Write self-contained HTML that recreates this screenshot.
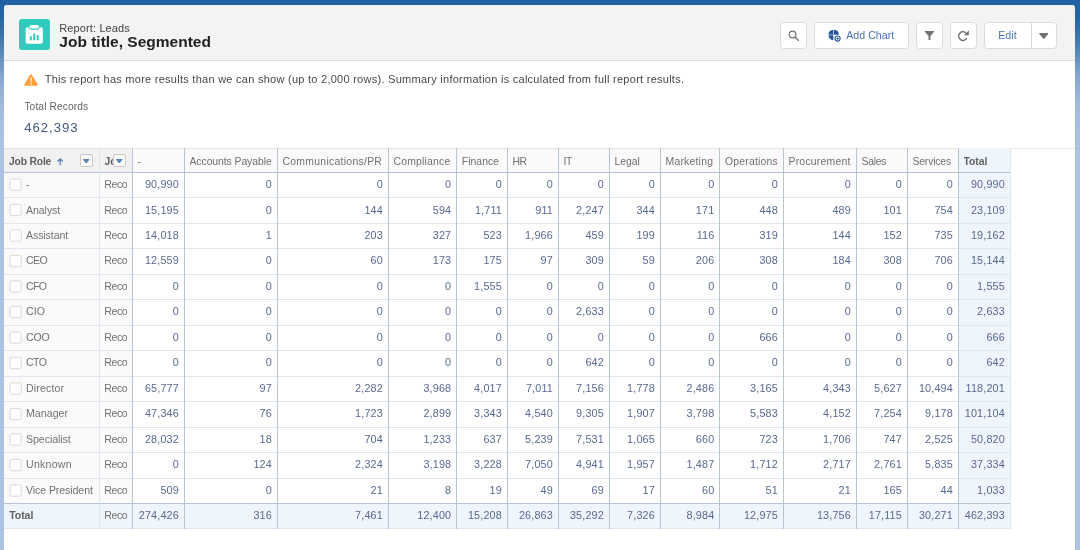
<!DOCTYPE html>
<html lang="en"><head><meta charset="utf-8"><title>Job title, Segmented</title>
<style>
*{box-sizing:border-box;margin:0;padding:0}
html,body{width:1080px;height:550px;overflow:hidden}
body{font-family:"Liberation Sans",sans-serif;font-size:11px;color:#3e3e3c;position:relative;
 background:linear-gradient(180deg,#1e62a3 0px,#2265a5 15px,#3a74ad 36px,#5c8cbd 55px,#7fa3cc 73px,#95b1d6 90px,#a4bbdc 109px,#abc0e0 130px,#adc1e1 150px,#adc1e1 550px)}
.panel{position:absolute;left:4px;top:5px;width:1071px;height:560px;background:linear-gradient(180deg,#f3f3f3 0,#f3f3f3 55px,#fff 55px);border-radius:3px 3px 0 0;overflow:hidden;will-change:transform}
.hdr{position:absolute;left:0;top:0;width:100%;height:55.5px;background:#f3f3f3;border-bottom:1px solid #dcdcdc}
.icon{position:absolute;left:15px;top:14px;width:30.5px;height:30.5px;border-radius:3px;background:#2ecbbe}
.t{position:absolute;white-space:nowrap}
.btn{position:absolute;top:17px;height:26.5px;background:#fff;border:1px solid #dddbda;border-radius:3.5px}
.btn span{position:absolute;font-size:10.6px;color:#4673b4;white-space:nowrap;line-height:13px}
.c{position:absolute;white-space:nowrap;overflow:hidden;line-height:13px}
.n{text-align:right;color:#586990;font-size:10.8px;letter-spacing:0.17px}
.g{color:#747270;font-size:10.6px}
.h{color:#72706e;font-size:10.4px}
.vl{position:absolute;width:1px}
.hl{position:absolute;height:1px}
.cb{position:absolute;width:12px;height:12px;background:#fff;border:1px solid #dedcdb;border-radius:2px}
.dd{position:absolute;width:13px;height:13px;background:#fafaf9;border:1px solid #c9c9c9;border-radius:2px}
.dd svg{position:absolute;left:2.2px;top:3.3px}
</style></head><body>
<div class="panel">

<div class="hdr"></div>
<div class="icon"><svg viewBox="0 -0.900 36 36" width="30.5" height="30.5" style="position:absolute;left:0;top:0"><path fill="#fff" d="M9.6 9.2h1.9c.2 1.5 1.4 2.5 2.9 2.5h7.2c1.5 0 2.7-1 2.9-2.5h1.9c1 0 1.7.8 1.7 1.7v15.6c0 1-.8 1.7-1.7 1.700H9.600c-1 0-1.700-.8-1.700-1.700V10.900c0-1 .8-1.700 1.700-1.700z"/><rect x="12.300" y="6.200" width="11.400" height="4.200" rx="2.100" fill="#fff"/><rect x="12.800" y="19.500" width="2.300" height="4.700" fill="#2ecbbe"/><rect x="16.800" y="16.300" width="2.400" height="7.900" fill="#2ecbbe"/><rect x="20.900" y="18" width="2.300" height="6.200" fill="#2ecbbe"/></svg></div>
<div class="t" style="left:55.3px;top:16.8px;font-size:11px;line-height:13px;color:#444;letter-spacing:0.119px;">Report: Leads</div>
<div class="t" style="left:55.3px;top:26.9px;font-size:15.5px;line-height:19px;font-weight:bold;color:#222;letter-spacing:0.003px;">Job title, Segmented</div>
<div class="btn" style="left:776px;width:26.5px;"><svg viewBox="0 0 24 24" width="11.6" height="11.6" style="position:absolute;left:6.6px;top:6.8px"><circle cx="9.500" cy="9.500" r="7" fill="none" stroke="#747270" stroke-width="2.500"/><path d="M14.800 14.800L22 22" stroke="#747270" stroke-width="2.800" stroke-linecap="round"/></svg></div>
<div class="btn" style="left:810px;width:94.5px;"><svg viewBox="0 0 14 13" width="14" height="13" style="position:absolute;left:13px;top:6px"><g fill="#25569e"><path d="M5.400 5.700V.800A5.200 5.200 0 0 0 .500 5.700z"/><path d="M6 5.700V.800A5.200 5.200 0 0 1 10.900 5.700z"/><path d="M5.400 6.300H.500A5.200 5.200 0 0 0 5.400 11.200z"/></g><circle cx="9.600" cy="9.600" r="3.500" fill="#fff"/><circle cx="9.600" cy="9.600" r="2.550" fill="#fff" stroke="#25569e" stroke-width="1.100"/><path d="M8.300 9.600h2.600M9.600 8.300v2.600" stroke="#25569e" stroke-width=".9"/></svg><span style="left:31.2px;top:6.2px;letter-spacing:0.044px;">Add Chart</span></div>
<div class="btn" style="left:912px;width:26.5px;"><svg viewBox="0 0 11 11" width="11" height="11" style="position:absolute;left:7px;top:7px"><path fill="#747270" d="M0.900 1.100H10c.3 0 .4.300.2.500L6.500 6.100V9.600c0 .2-.1.300-.3.300H4.800c-.2 0-.3-.1-.3-.3V6.100L.700 1.600C.500 1.400.600 1.100.900 1.100z"/></svg></div>
<div class="btn" style="left:946px;width:26.5px;"><svg viewBox="0 0 13 13" width="13" height="13" style="position:absolute;left:6px;top:6px"><path fill="none" stroke="#747270" stroke-width="1.500" stroke-linecap="round" d="M8.400 3.500A4.300 4.300 0 1 0 9.500 9.600"/><path fill="#747270" d="M11.800 1.500V6.300H6.900z"/></svg></div>
<div class="btn" style="left:980px;width:47.5px;border-radius:3.5px 0 0 3.5px"><span style="left:13.2px;top:6.4px;letter-spacing:0.084px;">Edit</span></div>
<div class="btn" style="left:1026.5px;width:26.5px;border-radius:0 3.5px 3.5px 0"><svg viewBox="0 0 20 13" width="9.5" height="6" style="position:absolute;left:7.1px;top:9.7px"><path fill="#747270" d="M1.300 0h17.400c1 0 1.600 1.200.9 2L11 12.400c-.5.700-1.500.7-2 0L.4 2C-.3 1.200.3 0 1.300 0z"/></svg></div>
<svg viewBox="0 0 28 24" width="14" height="11.800" style="position:absolute;left:20.4px;top:69px"><path fill="#ff9e3d" d="M12.300 1.500c.8-1.300 2.600-1.300 3.400 0l11.600 19.300c.8 1.300-.2 3-1.700 3H2.400c-1.500 0-2.500-1.700-1.700-3z"/><rect x="12.700" y="7.500" width="2.600" height="8.500" rx="1.200" fill="#fff"/><circle cx="14" cy="19.500" r="1.700" fill="#fff"/></svg>
<div class="t" style="left:40.7px;top:68.3px;font-size:11px;line-height:13px;color:#484848;letter-spacing:0.265px;">This report has more results than we can show (up to 2,000 rows). Summary information is calculated from full report results.</div>
<div class="t" style="left:20.4px;top:95.9px;font-size:10.2px;line-height:12px;color:#626262;letter-spacing:0.123px;">Total Records</div>
<div class="t" style="left:20.2px;top:113.6px;font-size:13.2px;line-height:17px;color:#43598a;letter-spacing:0.961px;">462,393</div>
<div class="hl" style="left:0;top:143px;width:1071px;background:#e4e6ea"></div>
<div style="position:absolute;left:0;top:144px;width:128.5px;height:23px;background:#f1f1f1"></div>
<div style="position:absolute;left:128.5px;top:144px;width:826px;height:23px;background:#fafafa"></div>
<div style="position:absolute;left:0;top:167px;width:128.5px;height:356.5px;background:#fafafa"></div>
<div style="position:absolute;left:954.5px;top:143px;width:52px;height:380.5px;background:#eef5fc"></div>
<div style="position:absolute;left:0;top:498.5px;width:1006.5px;height:25px;background:#eef5fc"></div>
<div class="hl" style="left:0;top:166.5px;width:1007px;background:#b7c4d6"></div>
<div class="hl" style="left:0;top:192px;width:1007px;background:#dfe6f0"></div>
<div class="hl" style="left:0;top:217.5px;width:1007px;background:#dfe6f0"></div>
<div class="hl" style="left:0;top:243px;width:1007px;background:#dfe6f0"></div>
<div class="hl" style="left:0;top:268.5px;width:1007px;background:#dfe6f0"></div>
<div class="hl" style="left:0;top:294px;width:1007px;background:#dfe6f0"></div>
<div class="hl" style="left:0;top:319.5px;width:1007px;background:#dfe6f0"></div>
<div class="hl" style="left:0;top:345px;width:1007px;background:#dfe6f0"></div>
<div class="hl" style="left:0;top:370.5px;width:1007px;background:#dfe6f0"></div>
<div class="hl" style="left:0;top:396px;width:1007px;background:#dfe6f0"></div>
<div class="hl" style="left:0;top:421.5px;width:1007px;background:#dfe6f0"></div>
<div class="hl" style="left:0;top:447px;width:1007px;background:#dfe6f0"></div>
<div class="hl" style="left:0;top:472.5px;width:1007px;background:#dfe6f0"></div>
<div class="hl" style="left:0;top:498px;width:1007px;background:#b7c4d6"></div>
<div class="hl" style="left:0;top:523px;width:1007px;background:#dfe6f0"></div>
<div class="vl" style="left:95px;top:143px;height:380.5px;background:#dfe6f0"></div>
<div class="vl" style="left:128px;top:143px;height:380.5px;background:#b7c4d6"></div>
<div class="vl" style="left:180px;top:143px;height:380.5px;background:#b7c4d6"></div>
<div class="vl" style="left:273px;top:143px;height:380.5px;background:#b7c4d6"></div>
<div class="vl" style="left:384px;top:143px;height:380.5px;background:#b7c4d6"></div>
<div class="vl" style="left:452.3px;top:143px;height:380.5px;background:#b7c4d6"></div>
<div class="vl" style="left:503px;top:143px;height:380.5px;background:#b7c4d6"></div>
<div class="vl" style="left:554px;top:143px;height:380.5px;background:#b7c4d6"></div>
<div class="vl" style="left:605px;top:143px;height:380.5px;background:#b7c4d6"></div>
<div class="vl" style="left:656px;top:143px;height:380.5px;background:#b7c4d6"></div>
<div class="vl" style="left:715.4px;top:143px;height:380.5px;background:#b7c4d6"></div>
<div class="vl" style="left:779px;top:143px;height:380.5px;background:#b7c4d6"></div>
<div class="vl" style="left:852px;top:143px;height:380.5px;background:#b7c4d6"></div>
<div class="vl" style="left:903px;top:143px;height:380.5px;background:#b7c4d6"></div>
<div class="vl" style="left:954px;top:143px;height:380.5px;background:#b7c4d6"></div>
<div class="vl" style="left:1006px;top:143px;height:380.5px;background:#dfe6f0"></div>
<div class="c h" style="left:5px;top:149.8px;width:90px;font-weight:bold;color:#626262;letter-spacing:-0.211px;">Job Role</div>
<svg viewBox="0 0 14 16" width="6.400" height="7.300" style="position:absolute;left:52.7px;top:153.4px"><path fill="none" stroke="#5b86b9" stroke-width="2.800" stroke-linecap="round" stroke-linejoin="round" d="M7 15V2M1.800 7L7 1.800 12.200 7"/></svg>
<div class="c h" style="left:100.5px;top:149.8px;width:9.500px;font-weight:bold;color:#626262">Jo</div>
<div class="c h" style="left:133.5px;top:149.8px;width:46.5px;">-</div>
<div class="c h" style="left:185.5px;top:149.8px;width:87.5px;letter-spacing:-0.065px;">Accounts Payable</div>
<div class="c h" style="left:278.5px;top:149.8px;width:105.5px;letter-spacing:0.291px;">Communications/PR</div>
<div class="c h" style="left:389.5px;top:149.8px;width:62.8px;letter-spacing:0.212px;">Compliance</div>
<div class="c h" style="left:457.8px;top:149.8px;width:45.2px;letter-spacing:0.033px;">Finance</div>
<div class="c h" style="left:508.5px;top:149.8px;width:45.5px;letter-spacing:-0.433px;">HR</div>
<div class="c h" style="left:559.5px;top:149.8px;width:45.5px;letter-spacing:-0.292px;">IT</div>
<div class="c h" style="left:610.5px;top:149.8px;width:45.5px;letter-spacing:-0.058px;">Legal</div>
<div class="c h" style="left:661.5px;top:149.8px;width:53.9px;letter-spacing:0.225px;">Marketing</div>
<div class="c h" style="left:720.9px;top:149.8px;width:58.1px;letter-spacing:0.232px;">Operations</div>
<div class="c h" style="left:784.5px;top:149.8px;width:67.5px;letter-spacing:0.242px;">Procurement</div>
<div class="c h" style="left:857.5px;top:149.8px;width:45.5px;letter-spacing:-0.27px;">Sales</div>
<div class="c h" style="left:908.5px;top:149.8px;width:45.5px;letter-spacing:-0.18px;">Services</div>
<div class="c h" style="left:959.5px;top:149.8px;width:46.5px;font-weight:bold;color:#626262;letter-spacing:-0.033px;">Total</div>
<div class="dd" style="left:76.3px;top:149.3px"><svg viewBox="0 0 13 9" width="6.500" height="4.500"><path fill="#5b86b9" d="M1 0h11c.8 0 1.200.9.700 1.500L7.300 8.600c-.4.500-1.200.5-1.600 0L.3 1.500C-.2.900.2 0 1 0z"/></svg></div>
<div class="dd" style="left:109.3px;top:149.3px"><svg viewBox="0 0 13 9" width="6.500" height="4.500"><path fill="#5b86b9" d="M1 0h11c.8 0 1.200.9.700 1.500L7.300 8.600c-.4.500-1.200.5-1.600 0L.3 1.500C-.2.900.2 0 1 0z"/></svg></div>
<div class="c g" style="left:22px;top:173px;width:72.5px;">-</div>
<div class="c g" style="left:100.3px;top:173px;width:22.700px;letter-spacing:-0.450px">Record Count</div>
<div class="c n" style="left:129.5px;top:173px;width:45.47px">90,990</div>
<div class="c n" style="left:181.5px;top:173px;width:86.47px">0</div>
<div class="c n" style="left:274.5px;top:173px;width:104.47px">0</div>
<div class="c n" style="left:385.5px;top:173px;width:61.77px">0</div>
<div class="c n" style="left:453.8px;top:173px;width:44.17px">0</div>
<div class="c n" style="left:504.5px;top:173px;width:44.47px">0</div>
<div class="c n" style="left:555.5px;top:173px;width:44.47px">0</div>
<div class="c n" style="left:606.5px;top:173px;width:44.47px">0</div>
<div class="c n" style="left:657.5px;top:173px;width:52.87px">0</div>
<div class="c n" style="left:716.9px;top:173px;width:57.07px">0</div>
<div class="c n" style="left:780.5px;top:173px;width:66.47px">0</div>
<div class="c n" style="left:853.5px;top:173px;width:44.47px">0</div>
<div class="c n" style="left:904.5px;top:173px;width:44.47px">0</div>
<div class="c n" style="left:955.5px;top:173px;width:45.47px">90,990</div>
<div class="c g" style="left:22px;top:199px;width:72.5px;letter-spacing:-0.079px;">Analyst</div>
<div class="c g" style="left:100.3px;top:199px;width:22.700px;letter-spacing:-0.450px">Record Count</div>
<div class="c n" style="left:129.5px;top:199px;width:45.47px">15,195</div>
<div class="c n" style="left:181.5px;top:199px;width:86.47px">0</div>
<div class="c n" style="left:274.5px;top:199px;width:104.47px">144</div>
<div class="c n" style="left:385.5px;top:199px;width:61.77px">594</div>
<div class="c n" style="left:453.8px;top:199px;width:44.17px">1,711</div>
<div class="c n" style="left:504.5px;top:199px;width:44.47px">911</div>
<div class="c n" style="left:555.5px;top:199px;width:44.47px">2,247</div>
<div class="c n" style="left:606.5px;top:199px;width:44.47px">344</div>
<div class="c n" style="left:657.5px;top:199px;width:52.87px">171</div>
<div class="c n" style="left:716.9px;top:199px;width:57.07px">448</div>
<div class="c n" style="left:780.5px;top:199px;width:66.47px">489</div>
<div class="c n" style="left:853.5px;top:199px;width:44.47px">101</div>
<div class="c n" style="left:904.5px;top:199px;width:44.47px">754</div>
<div class="c n" style="left:955.5px;top:199px;width:45.47px">23,109</div>
<div class="c g" style="left:22px;top:224px;width:72.5px;letter-spacing:-0.098px;">Assistant</div>
<div class="c g" style="left:100.3px;top:224px;width:22.700px;letter-spacing:-0.450px">Record Count</div>
<div class="c n" style="left:129.5px;top:224px;width:45.47px">14,018</div>
<div class="c n" style="left:181.5px;top:224px;width:86.47px">1</div>
<div class="c n" style="left:274.5px;top:224px;width:104.47px">203</div>
<div class="c n" style="left:385.5px;top:224px;width:61.77px">327</div>
<div class="c n" style="left:453.8px;top:224px;width:44.17px">523</div>
<div class="c n" style="left:504.5px;top:224px;width:44.47px">1,966</div>
<div class="c n" style="left:555.5px;top:224px;width:44.47px">459</div>
<div class="c n" style="left:606.5px;top:224px;width:44.47px">199</div>
<div class="c n" style="left:657.5px;top:224px;width:52.87px">116</div>
<div class="c n" style="left:716.9px;top:224px;width:57.07px">319</div>
<div class="c n" style="left:780.5px;top:224px;width:66.47px">144</div>
<div class="c n" style="left:853.5px;top:224px;width:44.47px">152</div>
<div class="c n" style="left:904.5px;top:224px;width:44.47px">735</div>
<div class="c n" style="left:955.5px;top:224px;width:45.47px">19,162</div>
<div class="c g" style="left:22px;top:249px;width:72.5px;letter-spacing:-0.656px;">CEO</div>
<div class="c g" style="left:100.3px;top:249px;width:22.700px;letter-spacing:-0.450px">Record Count</div>
<div class="c n" style="left:129.5px;top:249px;width:45.47px">12,559</div>
<div class="c n" style="left:181.5px;top:249px;width:86.47px">0</div>
<div class="c n" style="left:274.5px;top:249px;width:104.47px">60</div>
<div class="c n" style="left:385.5px;top:249px;width:61.77px">173</div>
<div class="c n" style="left:453.8px;top:249px;width:44.17px">175</div>
<div class="c n" style="left:504.5px;top:249px;width:44.47px">97</div>
<div class="c n" style="left:555.5px;top:249px;width:44.47px">309</div>
<div class="c n" style="left:606.5px;top:249px;width:44.47px">59</div>
<div class="c n" style="left:657.5px;top:249px;width:52.87px">206</div>
<div class="c n" style="left:716.9px;top:249px;width:57.07px">308</div>
<div class="c n" style="left:780.5px;top:249px;width:66.47px">184</div>
<div class="c n" style="left:853.5px;top:249px;width:44.47px">308</div>
<div class="c n" style="left:904.5px;top:249px;width:44.47px">706</div>
<div class="c n" style="left:955.5px;top:249px;width:45.47px">15,144</div>
<div class="c g" style="left:22px;top:275px;width:72.5px;letter-spacing:-0.625px;">CFO</div>
<div class="c g" style="left:100.3px;top:275px;width:22.700px;letter-spacing:-0.450px">Record Count</div>
<div class="c n" style="left:129.5px;top:275px;width:45.47px">0</div>
<div class="c n" style="left:181.5px;top:275px;width:86.47px">0</div>
<div class="c n" style="left:274.5px;top:275px;width:104.47px">0</div>
<div class="c n" style="left:385.5px;top:275px;width:61.77px">0</div>
<div class="c n" style="left:453.8px;top:275px;width:44.17px">1,555</div>
<div class="c n" style="left:504.5px;top:275px;width:44.47px">0</div>
<div class="c n" style="left:555.5px;top:275px;width:44.47px">0</div>
<div class="c n" style="left:606.5px;top:275px;width:44.47px">0</div>
<div class="c n" style="left:657.5px;top:275px;width:52.87px">0</div>
<div class="c n" style="left:716.9px;top:275px;width:57.07px">0</div>
<div class="c n" style="left:780.5px;top:275px;width:66.47px">0</div>
<div class="c n" style="left:853.5px;top:275px;width:44.47px">0</div>
<div class="c n" style="left:904.5px;top:275px;width:44.47px">0</div>
<div class="c n" style="left:955.5px;top:275px;width:45.47px">1,555</div>
<div class="c g" style="left:22px;top:300px;width:72.5px;letter-spacing:0.052px;">CIO</div>
<div class="c g" style="left:100.3px;top:300px;width:22.700px;letter-spacing:-0.450px">Record Count</div>
<div class="c n" style="left:129.5px;top:300px;width:45.47px">0</div>
<div class="c n" style="left:181.5px;top:300px;width:86.47px">0</div>
<div class="c n" style="left:274.5px;top:300px;width:104.47px">0</div>
<div class="c n" style="left:385.5px;top:300px;width:61.77px">0</div>
<div class="c n" style="left:453.8px;top:300px;width:44.17px">0</div>
<div class="c n" style="left:504.5px;top:300px;width:44.47px">0</div>
<div class="c n" style="left:555.5px;top:300px;width:44.47px">2,633</div>
<div class="c n" style="left:606.5px;top:300px;width:44.47px">0</div>
<div class="c n" style="left:657.5px;top:300px;width:52.87px">0</div>
<div class="c n" style="left:716.9px;top:300px;width:57.07px">0</div>
<div class="c n" style="left:780.5px;top:300px;width:66.47px">0</div>
<div class="c n" style="left:853.5px;top:300px;width:44.47px">0</div>
<div class="c n" style="left:904.5px;top:300px;width:44.47px">0</div>
<div class="c n" style="left:955.5px;top:300px;width:45.47px">2,633</div>
<div class="c g" style="left:22px;top:326px;width:72.5px;letter-spacing:-0.18px;">COO</div>
<div class="c g" style="left:100.3px;top:326px;width:22.700px;letter-spacing:-0.450px">Record Count</div>
<div class="c n" style="left:129.5px;top:326px;width:45.47px">0</div>
<div class="c n" style="left:181.5px;top:326px;width:86.47px">0</div>
<div class="c n" style="left:274.5px;top:326px;width:104.47px">0</div>
<div class="c n" style="left:385.5px;top:326px;width:61.77px">0</div>
<div class="c n" style="left:453.8px;top:326px;width:44.17px">0</div>
<div class="c n" style="left:504.5px;top:326px;width:44.47px">0</div>
<div class="c n" style="left:555.5px;top:326px;width:44.47px">0</div>
<div class="c n" style="left:606.5px;top:326px;width:44.47px">0</div>
<div class="c n" style="left:657.5px;top:326px;width:52.87px">0</div>
<div class="c n" style="left:716.9px;top:326px;width:57.07px">666</div>
<div class="c n" style="left:780.5px;top:326px;width:66.47px">0</div>
<div class="c n" style="left:853.5px;top:326px;width:44.47px">0</div>
<div class="c n" style="left:904.5px;top:326px;width:44.47px">0</div>
<div class="c n" style="left:955.5px;top:326px;width:45.47px">666</div>
<div class="c g" style="left:22px;top:351px;width:72.5px;letter-spacing:-0.557px;">CTO</div>
<div class="c g" style="left:100.3px;top:351px;width:22.700px;letter-spacing:-0.450px">Record Count</div>
<div class="c n" style="left:129.5px;top:351px;width:45.47px">0</div>
<div class="c n" style="left:181.5px;top:351px;width:86.47px">0</div>
<div class="c n" style="left:274.5px;top:351px;width:104.47px">0</div>
<div class="c n" style="left:385.5px;top:351px;width:61.77px">0</div>
<div class="c n" style="left:453.8px;top:351px;width:44.17px">0</div>
<div class="c n" style="left:504.5px;top:351px;width:44.47px">0</div>
<div class="c n" style="left:555.5px;top:351px;width:44.47px">642</div>
<div class="c n" style="left:606.5px;top:351px;width:44.47px">0</div>
<div class="c n" style="left:657.5px;top:351px;width:52.87px">0</div>
<div class="c n" style="left:716.9px;top:351px;width:57.07px">0</div>
<div class="c n" style="left:780.5px;top:351px;width:66.47px">0</div>
<div class="c n" style="left:853.5px;top:351px;width:44.47px">0</div>
<div class="c n" style="left:904.5px;top:351px;width:44.47px">0</div>
<div class="c n" style="left:955.5px;top:351px;width:45.47px">642</div>
<div class="c g" style="left:22px;top:377px;width:72.5px;letter-spacing:0.151px;">Director</div>
<div class="c g" style="left:100.3px;top:377px;width:22.700px;letter-spacing:-0.450px">Record Count</div>
<div class="c n" style="left:129.5px;top:377px;width:45.47px">65,777</div>
<div class="c n" style="left:181.5px;top:377px;width:86.47px">97</div>
<div class="c n" style="left:274.5px;top:377px;width:104.47px">2,282</div>
<div class="c n" style="left:385.5px;top:377px;width:61.77px">3,968</div>
<div class="c n" style="left:453.8px;top:377px;width:44.17px">4,017</div>
<div class="c n" style="left:504.5px;top:377px;width:44.47px">7,011</div>
<div class="c n" style="left:555.5px;top:377px;width:44.47px">7,156</div>
<div class="c n" style="left:606.5px;top:377px;width:44.47px">1,778</div>
<div class="c n" style="left:657.5px;top:377px;width:52.87px">2,486</div>
<div class="c n" style="left:716.9px;top:377px;width:57.07px">3,165</div>
<div class="c n" style="left:780.5px;top:377px;width:66.47px">4,343</div>
<div class="c n" style="left:853.5px;top:377px;width:44.47px">5,627</div>
<div class="c n" style="left:904.5px;top:377px;width:44.47px">10,494</div>
<div class="c n" style="left:955.5px;top:377px;width:45.47px">118,201</div>
<div class="c g" style="left:22px;top:402px;width:72.5px;letter-spacing:0.041px;">Manager</div>
<div class="c g" style="left:100.3px;top:402px;width:22.700px;letter-spacing:-0.450px">Record Count</div>
<div class="c n" style="left:129.5px;top:402px;width:45.47px">47,346</div>
<div class="c n" style="left:181.5px;top:402px;width:86.47px">76</div>
<div class="c n" style="left:274.5px;top:402px;width:104.47px">1,723</div>
<div class="c n" style="left:385.5px;top:402px;width:61.77px">2,899</div>
<div class="c n" style="left:453.8px;top:402px;width:44.17px">3,343</div>
<div class="c n" style="left:504.5px;top:402px;width:44.47px">4,540</div>
<div class="c n" style="left:555.5px;top:402px;width:44.47px">9,305</div>
<div class="c n" style="left:606.5px;top:402px;width:44.47px">1,907</div>
<div class="c n" style="left:657.5px;top:402px;width:52.87px">3,798</div>
<div class="c n" style="left:716.9px;top:402px;width:57.07px">5,583</div>
<div class="c n" style="left:780.5px;top:402px;width:66.47px">4,152</div>
<div class="c n" style="left:853.5px;top:402px;width:44.47px">7,254</div>
<div class="c n" style="left:904.5px;top:402px;width:44.47px">9,178</div>
<div class="c n" style="left:955.5px;top:402px;width:45.47px">101,104</div>
<div class="c g" style="left:22px;top:428px;width:72.5px;letter-spacing:-0.064px;">Specialist</div>
<div class="c g" style="left:100.3px;top:428px;width:22.700px;letter-spacing:-0.450px">Record Count</div>
<div class="c n" style="left:129.5px;top:428px;width:45.47px">28,032</div>
<div class="c n" style="left:181.5px;top:428px;width:86.47px">18</div>
<div class="c n" style="left:274.5px;top:428px;width:104.47px">704</div>
<div class="c n" style="left:385.5px;top:428px;width:61.77px">1,233</div>
<div class="c n" style="left:453.8px;top:428px;width:44.17px">637</div>
<div class="c n" style="left:504.5px;top:428px;width:44.47px">5,239</div>
<div class="c n" style="left:555.5px;top:428px;width:44.47px">7,531</div>
<div class="c n" style="left:606.5px;top:428px;width:44.47px">1,065</div>
<div class="c n" style="left:657.5px;top:428px;width:52.87px">660</div>
<div class="c n" style="left:716.9px;top:428px;width:57.07px">723</div>
<div class="c n" style="left:780.5px;top:428px;width:66.47px">1,706</div>
<div class="c n" style="left:853.5px;top:428px;width:44.47px">747</div>
<div class="c n" style="left:904.5px;top:428px;width:44.47px">2,525</div>
<div class="c n" style="left:955.5px;top:428px;width:45.47px">50,820</div>
<div class="c g" style="left:22px;top:453px;width:72.5px;letter-spacing:0.247px;">Unknown</div>
<div class="c g" style="left:100.3px;top:453px;width:22.700px;letter-spacing:-0.450px">Record Count</div>
<div class="c n" style="left:129.5px;top:453px;width:45.47px">0</div>
<div class="c n" style="left:181.5px;top:453px;width:86.47px">124</div>
<div class="c n" style="left:274.5px;top:453px;width:104.47px">2,324</div>
<div class="c n" style="left:385.5px;top:453px;width:61.77px">3,198</div>
<div class="c n" style="left:453.8px;top:453px;width:44.17px">3,228</div>
<div class="c n" style="left:504.5px;top:453px;width:44.47px">7,050</div>
<div class="c n" style="left:555.5px;top:453px;width:44.47px">4,941</div>
<div class="c n" style="left:606.5px;top:453px;width:44.47px">1,957</div>
<div class="c n" style="left:657.5px;top:453px;width:52.87px">1,487</div>
<div class="c n" style="left:716.9px;top:453px;width:57.07px">1,712</div>
<div class="c n" style="left:780.5px;top:453px;width:66.47px">2,717</div>
<div class="c n" style="left:853.5px;top:453px;width:44.47px">2,761</div>
<div class="c n" style="left:904.5px;top:453px;width:44.47px">5,835</div>
<div class="c n" style="left:955.5px;top:453px;width:45.47px">37,334</div>
<div class="c g" style="left:22px;top:479px;width:72.5px;letter-spacing:-0.095px;">Vice President</div>
<div class="c g" style="left:100.3px;top:479px;width:22.700px;letter-spacing:-0.450px">Record Count</div>
<div class="c n" style="left:129.5px;top:479px;width:45.47px">509</div>
<div class="c n" style="left:181.5px;top:479px;width:86.47px">0</div>
<div class="c n" style="left:274.5px;top:479px;width:104.47px">21</div>
<div class="c n" style="left:385.5px;top:479px;width:61.77px">8</div>
<div class="c n" style="left:453.8px;top:479px;width:44.17px">19</div>
<div class="c n" style="left:504.5px;top:479px;width:44.47px">49</div>
<div class="c n" style="left:555.5px;top:479px;width:44.47px">69</div>
<div class="c n" style="left:606.5px;top:479px;width:44.47px">17</div>
<div class="c n" style="left:657.5px;top:479px;width:52.87px">60</div>
<div class="c n" style="left:716.9px;top:479px;width:57.07px">51</div>
<div class="c n" style="left:780.5px;top:479px;width:66.47px">21</div>
<div class="c n" style="left:853.5px;top:479px;width:44.47px">165</div>
<div class="c n" style="left:904.5px;top:479px;width:44.47px">44</div>
<div class="c n" style="left:955.5px;top:479px;width:45.47px">1,033</div>
<div class="c g" style="left:5.2px;top:504px;width:80px;font-weight:bold;color:#626262;letter-spacing:-0.086px;">Total</div>
<div class="c g" style="left:100.3px;top:504px;width:22.700px;letter-spacing:-0.450px">Record Count</div>
<div class="c n" style="left:129.5px;top:504px;width:45.47px">274,426</div>
<div class="c n" style="left:181.5px;top:504px;width:86.47px">316</div>
<div class="c n" style="left:274.5px;top:504px;width:104.47px">7,461</div>
<div class="c n" style="left:385.5px;top:504px;width:61.77px">12,400</div>
<div class="c n" style="left:453.8px;top:504px;width:44.17px">15,208</div>
<div class="c n" style="left:504.5px;top:504px;width:44.47px">26,863</div>
<div class="c n" style="left:555.5px;top:504px;width:44.47px">35,292</div>
<div class="c n" style="left:606.5px;top:504px;width:44.47px">7,326</div>
<div class="c n" style="left:657.5px;top:504px;width:52.87px">8,984</div>
<div class="c n" style="left:716.9px;top:504px;width:57.07px">12,975</div>
<div class="c n" style="left:780.5px;top:504px;width:66.47px">13,756</div>
<div class="c n" style="left:853.5px;top:504px;width:44.47px">17,115</div>
<div class="c n" style="left:904.5px;top:504px;width:44.47px">30,271</div>
<div class="c n" style="left:955.5px;top:504px;width:45.47px">462,393</div>
<svg width="120" height="545" viewBox="0 0 120 545" style="position:absolute;left:0;top:0"><g fill="#fff" stroke="#dad8d7" stroke-width="1"><rect x="6" y="173.9" width="11.200" height="11.300" rx="1.800"/><rect x="6" y="199.4" width="11.200" height="11.300" rx="1.800"/><rect x="6" y="224.9" width="11.200" height="11.300" rx="1.800"/><rect x="6" y="250.4" width="11.200" height="11.300" rx="1.800"/><rect x="6" y="275.9" width="11.200" height="11.300" rx="1.800"/><rect x="6" y="301.4" width="11.200" height="11.300" rx="1.800"/><rect x="6" y="326.9" width="11.200" height="11.300" rx="1.800"/><rect x="6" y="352.4" width="11.200" height="11.300" rx="1.800"/><rect x="6" y="377.9" width="11.200" height="11.300" rx="1.800"/><rect x="6" y="403.4" width="11.200" height="11.300" rx="1.800"/><rect x="6" y="428.9" width="11.200" height="11.300" rx="1.800"/><rect x="6" y="454.4" width="11.200" height="11.300" rx="1.800"/><rect x="6" y="479.9" width="11.200" height="11.300" rx="1.800"/></g></svg>
</div></body></html>
